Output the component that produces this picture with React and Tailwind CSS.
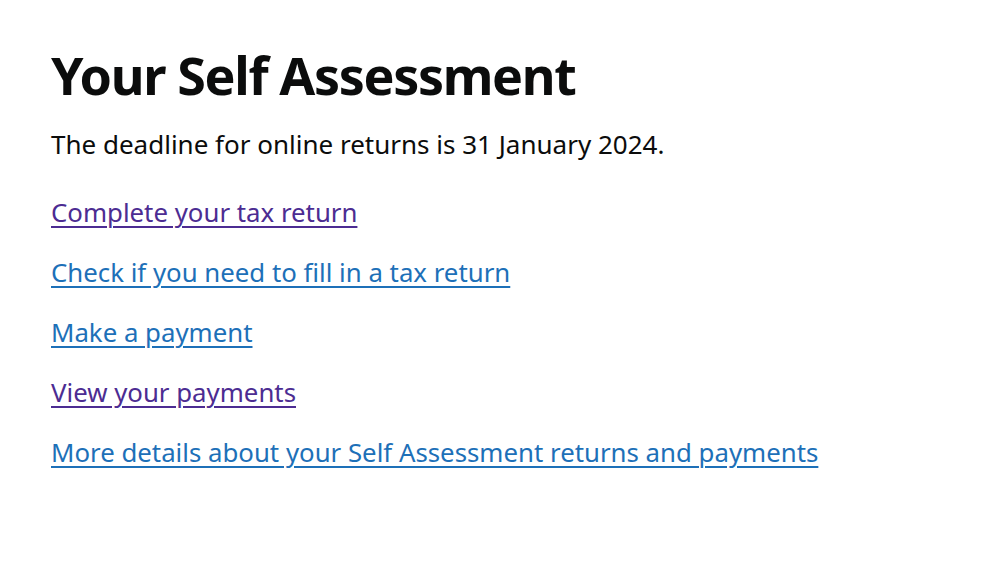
export default function App() {
  const links = [
    { t: "Complete your tax return", v: true },
    { t: "Check if you need to fill in a tax return", v: false },
    { t: "Make a payment", v: false },
    { t: "View your payments", v: true },
    { t: "More details about your Self Assessment returns and payments", v: false },
  ];
  return (
    <div className="min-h-[577px] w-full bg-white text-[#0b0c0c] px-[51px] pt-[43px]" style={{ fontFamily: '"Noto Sans", Arial, sans-serif' }}>
      <h1 className="text-[52px] font-bold leading-[64px] tracking-[-1.35px]">Your Self Assessment</h1>
      <p className="mt-[17px] text-[26px] leading-[40px]">The deadline for online returns is 31 January 2024.</p>
      <ul className="mt-[30px] flex flex-col gap-[24px]">
        {links.map((l) => (
          <li key={l.t} className="text-[25.8px] leading-[36px]">
            <a
              href="#"
              className={`underline decoration-[1.5px] underline-offset-[4px] ${l.v ? "text-[#4c2c92]" : "text-[#1d70b8]"}`}
            >
              {l.t}
            </a>
          </li>
        ))}
      </ul>
    </div>
  );
}
